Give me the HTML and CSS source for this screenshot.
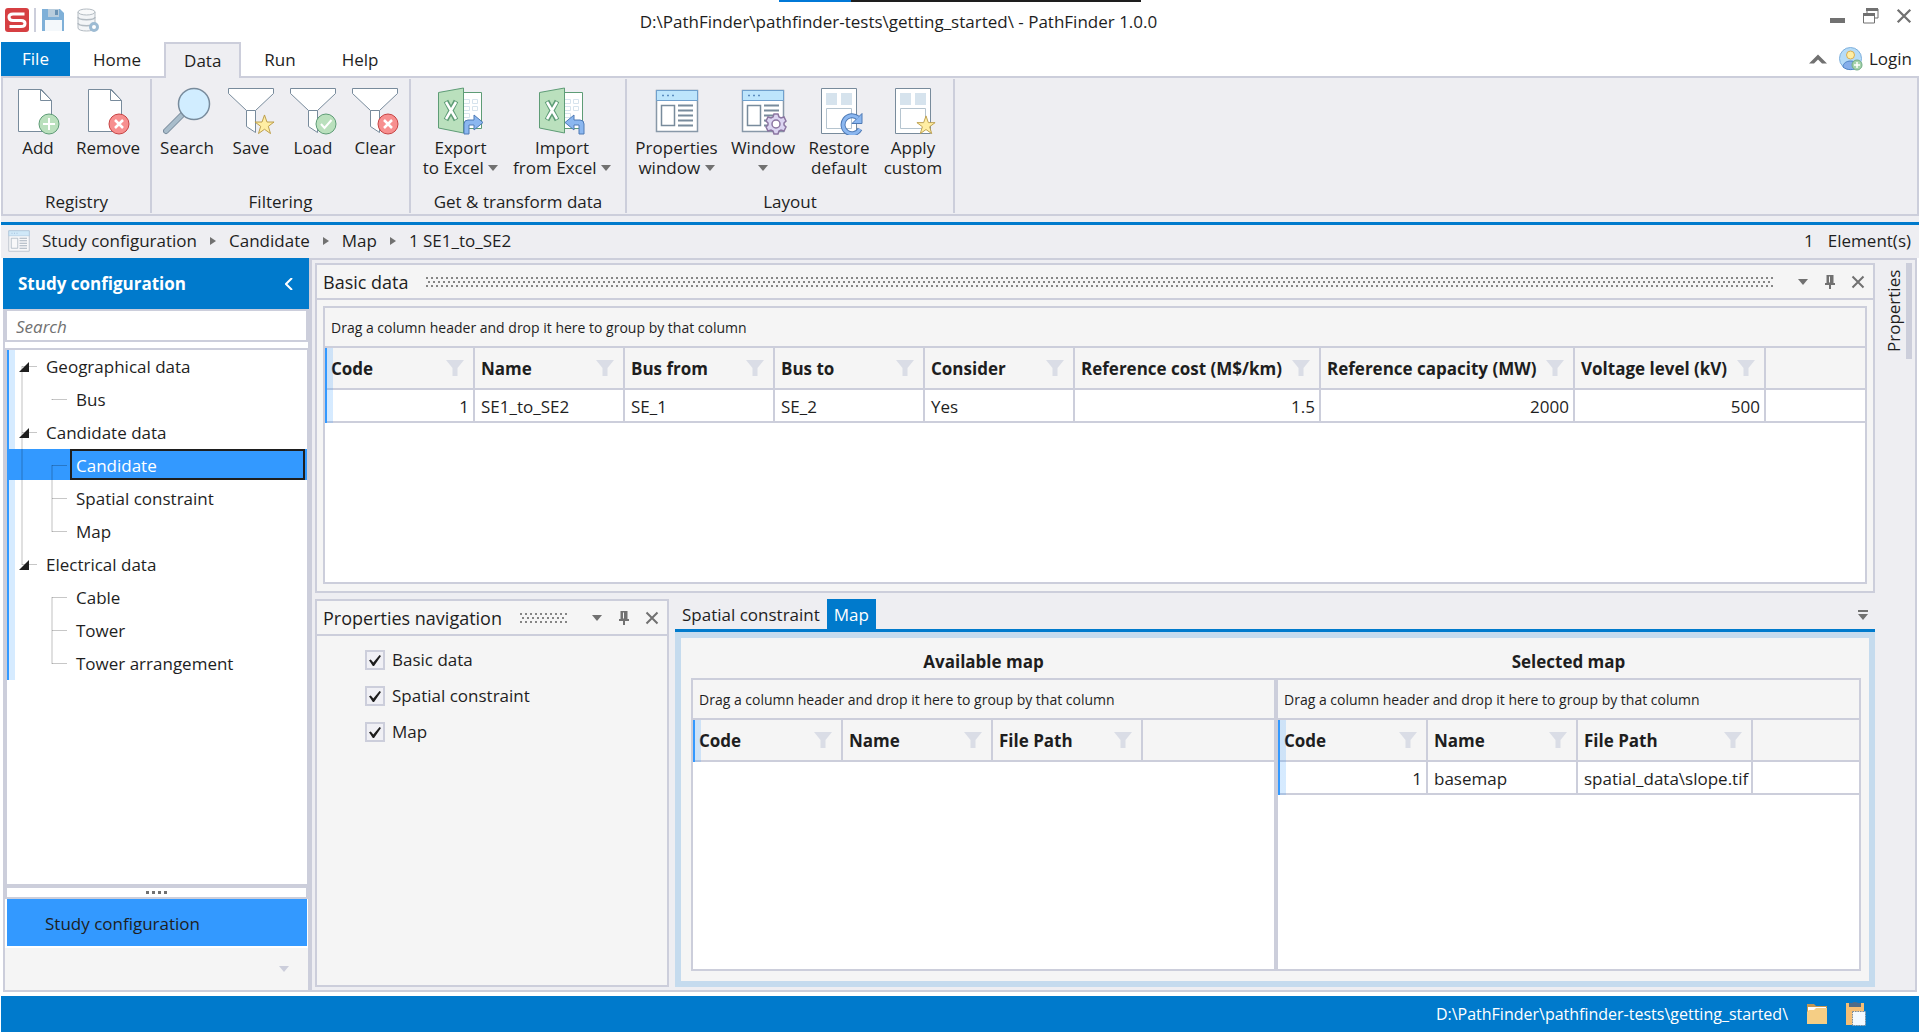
FILE: index.html
```html
<!DOCTYPE html>
<html lang="en">
<head>
  <meta charset="UTF-8">
  <title>PathFinder 1.0.0</title>
  <link rel="stylesheet" href="styles.css">
</head>
<body>
<!-- shared icons -->
<svg class="sprite" width="0" height="0">
  <symbol id="page" viewBox="0 0 48 48">
    <path d="M4.500 2.500h23l10 11v31h-33z" fill="#fff" stroke="#788b9c"/>
    <path d="M26.500 2.500v11h11z" fill="#fff" stroke="#788b9c"/>
  </symbol>
  <symbol id="plus-badge" viewBox="0 0 22 22">
    <circle cx="11" cy="11" r="10" fill="#bae0bd" stroke="#5e9c76"/>
    <path d="M11 5v12M5 11h12" stroke="#fff" stroke-width="2"/>
  </symbol>
  <symbol id="cross-badge" viewBox="0 0 22 22">
    <circle cx="11" cy="11" r="10" fill="#f78f8f" stroke="#c74343"/>
    <path d="M7 7l8 8M15 7l-8 8" stroke="#fff" stroke-width="2.500"/>
  </symbol>
  <symbol id="check-badge" viewBox="0 0 22 22">
    <circle cx="11" cy="11" r="10" fill="#bae0bd" stroke="#5e9c76"/>
    <path d="M6 11l3.500 4 7-8" fill="none" stroke="#fff" stroke-width="2"/>
  </symbol>
  <symbol id="star" viewBox="0 0 22 22">
    <path d="M11 1l2.600 7.400h7.400l-6 4.500 2.300 7.600-6.300-4.500-6.300 4.500 2.300-7.600-6-4.500h7.400z" fill="#ffeea3" stroke="#ba9b48"/>
  </symbol>
  <symbol id="funnel" viewBox="0 0 48 48">
    <path d="M19.500 23.500h9v22l-9-6z" fill="#fff" stroke="#788b9c"/>
    <path d="M1.500 1.500h45v5l-18 17h-9l-18-17z" fill="#fff" stroke="#788b9c"/>
  </symbol>
  <symbol id="excel" viewBox="0 0 48 48">
    <path d="M26 5.500h18.500v36h-18.500z" fill="#fff" stroke="#5e9c76"/>
    <path d="M26.500 12.500h6v4h-6zM35.500 12.500h5v4h-5zM26.500 19.500h6v4h-6zM35.500 19.500h5v4h-5zM26.500 26.500h6v4h-6z" fill="#fff" stroke="#d6e3ed"/>
    <path d="M1.500 5.500l25-4.500v45l-25-5z" fill="#bae0bd" stroke="#5e9c76"/>
    <path d="M9 14l10 19M19 14l-10 19" stroke="#5e9c76" stroke-width="5"/>
    <path d="M9 15l10 17M19 15l-10 17" stroke="#fff" stroke-width="2.500"/>
  </symbol>
  <symbol id="form" viewBox="0 0 48 48">
    <path d="M3.500 3.500h41v41h-41z" fill="#fff" stroke="#8898a8" stroke-width="1.500"/>
    <path d="M3.500 3.500h41v10h-41z" fill="#bde5fc" stroke="#6fa0cd"/>
    <path d="M9 8.500h2M14 8.500h2M19 8.500h2" stroke="#5b8dbf" stroke-width="1.500"/>
    <path d="M8.500 18.500h13v20h-13z" fill="#fff" stroke="#788b9c" stroke-width="1.500"/>
    <path d="M25 18.500h15M25 23.500h15M25 28.500h15M25 33.500h15M25 38.500h15" stroke="#788b9c" stroke-width="2"/>
  </symbol>
  <symbol id="gear" viewBox="0 0 22 22">
    <path d="M9 1h4l1 3 2 1 3-1 2 4-2 2v2l2 2-2 4-3-1-2 1-1 3h-4l-1-3-2-1-3 1-2-4 2-2v-2l-2-2 2-4 3 1 2-1z" fill="#dcd5f2" stroke="#8b75a1" stroke-width="1.500"/>
    <circle cx="11" cy="11" r="4" fill="#fff" stroke="#8b75a1" stroke-width="1.500"/>
  </symbol>
  <symbol id="layout" viewBox="0 0 48 48">
    <path d="M6.500 1.500h35v45h-35z" fill="#fff" stroke="#788b9c"/>
    <path d="M11 6h11v12h-11zM26 6h11v12h-11z" fill="#d6e3ed"/>
    <path d="M11.500 21.500h25v20h-25z" fill="#fff" stroke="#b5c4cf"/>
  </symbol>
  <symbol id="pin" viewBox="0 0 12 16">
    <path d="M2.500 1h7v8h1.500v2h-4v4h-2v-4h-4v-2h1.500zM5 2.500v6h1v-6z" fill="#717171" fill-rule="evenodd"/>
  </symbol>
  <symbol id="close" viewBox="0 0 14 14">
    <path d="M1.500 1.500l11 11M12.500 1.500l-11 11" stroke="#717171" stroke-width="2"/>
  </symbol>
  <symbol id="filter" viewBox="0 0 18 16">
    <path d="M0 0h18l-6.500 8v8h-5v-8z" fill="#dadde6"/>
  </symbol>
</svg>

<header class="titlebar">
  <div class="quick">
    <svg width="24" height="24" viewBox="0 0 24 24"><rect width="24" height="24" rx="3" fill="#d63f42"/><path d="M19.500 6h-11.500c-3 0-4 1-4 3s1 3.500 4 3.500h8c3 0 4 1 4 3s-1 3-4 3h-11.500" fill="none" stroke="#fff" stroke-width="3"/></svg>
    <span class="quick-sep"></span>
    <button aria-label="Save all"><svg width="24" height="24" viewBox="0 0 24 24"><path d="M1 1h18l4 4v18h-22z" fill="#7fb0d8"/><path d="M7 1h11v8h-11z" fill="#b9cddd"/><path d="M14 2h3v5h-3z" fill="#6b93b5"/><path d="M4 12h17v11h-17z" fill="#f4f8fb"/></svg></button>
    <button aria-label="Database"><svg width="24" height="24" viewBox="0 0 24 24"><path d="M2 4v16c0 4 17 4 17 0v-16" fill="#f3f5f7" stroke="#b3bbc2"/><path d="M2 9c0 3.500 17 3.500 17 0M2 15c0 3.500 17 3.500 17 0" fill="none" stroke="#b3bbc2" stroke-width="1.500"/><ellipse cx="10.500" cy="4" rx="8.500" ry="3" fill="#f8f9fa" stroke="#b3bbc2"/><circle cx="18" cy="19" r="3.500" fill="#fff" stroke="#9dbbd3" stroke-width="3"/></svg></button>
  </div>
  <div class="title">D:\PathFinder\pathfinder-tests\getting_started\ - PathFinder 1.0.0</div>
  <div class="winbtns">
    <button aria-label="Minimize"><svg width="16" height="16" viewBox="0 0 16 16"><path d="M0 10h15v5h-15z" fill="#717171"/></svg></button>
    <button aria-label="Restore"><svg width="16" height="16" viewBox="0 0 16 16"><path d="M4 5v-4h11v9h-3" fill="none" stroke="#717171"/><path d="M3 1.500h12" stroke="#717171" stroke-width="3"/><path d="M.5 6.500h11v8.500h-11z" fill="#fff" stroke="#717171"/><path d="M0 6.500h12" stroke="#717171" stroke-width="3"/></svg></button>
    <button aria-label="Close"><svg width="16" height="16" viewBox="0 0 14 14"><use href="#close"/></svg></button>
  </div>
  <div class="progress"></div>
</header>

<nav class="tabs">
  <button class="file">File</button>
  <button>Home</button>
  <button class="on">Data</button>
  <button>Run</button>
  <button>Help</button>
  <div class="account">
    <svg width="18" height="10" viewBox="0 0 18 10"><path d="M0 9.500l9-9 9 9h-5l-4-4-4 4z" fill="#717171"/></svg>
    <button class="login">
      <svg width="24" height="24" viewBox="0 0 24 24"><circle cx="11.500" cy="11.500" r="11" fill="#b6dcf7" stroke="#7eafdc"/><path d="M4 20c0-8 15-8 15 0-4 3.500-11 3.500-15 0z" fill="#85aeea" stroke="#4c82c4"/><circle cx="11.500" cy="8" r="4" fill="#ffeea3" stroke="#d8ad55"/><circle cx="18" cy="18" r="5" fill="#a5d3ab" stroke="#71ac84"/><path d="M18 15v6M15 18h6" stroke="#fff" stroke-width="1.500"/></svg>
      Login
    </button>
  </div>
</nav>

<section class="ribbon">
  <div class="group registry">
    <div class="tools">
      <button><svg viewBox="0 0 48 48"><use href="#page"/><use href="#plus-badge" x="24" y="26" width="22" height="22"/></svg>Add</button>
      <button class="w-m"><svg viewBox="0 0 48 48"><use href="#page"/><use href="#cross-badge" x="24" y="26" width="22" height="22"/></svg>Remove</button>
    </div>
    <div class="caption">Registry</div>
  </div>
  <div class="group">
    <div class="tools">
      <button class="w-search"><svg viewBox="0 0 48 48"><path d="M21 26l-18 18" stroke="#788b9c" stroke-width="6" stroke-linecap="round"/><path d="M21 26l-18 18" stroke="#a9bdcb" stroke-width="4" stroke-linecap="round"/><circle cx="31" cy="17" r="15.500" fill="#d1edff" stroke="#788b9c" stroke-width="1.500"/></svg>Search</button>
      <button><svg viewBox="0 0 48 48"><use href="#funnel"/><use href="#star" x="27" y="27" width="21" height="21"/></svg>Save</button>
      <button><svg viewBox="0 0 48 48"><use href="#funnel"/><use href="#check-badge" x="26" y="26" width="22" height="22"/></svg>Load</button>
      <button><svg viewBox="0 0 48 48"><use href="#funnel"/><use href="#cross-badge" x="26" y="26" width="22" height="22"/></svg>Clear</button>
    </div>
    <div class="caption">Filtering</div>
  </div>
  <div class="group transform">
    <div class="tools">
      <button class="w-l"><svg viewBox="0 0 48 48"><use href="#excel"/><path d="M27 47v-10q0-4 4-4h6v-5l9 7.500-9 7.500v-5h-5v9z" fill="#8bb7f0" stroke="#4e7ab5"/></svg>Export<span>to Excel <i class="caret"></i></span></button>
      <button class="w-xl"><svg viewBox="0 0 48 48"><use href="#excel"/><path d="M46 47v-10q0-4-4-4h-6v-5l-9 7.500 9 7.500v-5h5v9z" fill="#8bb7f0" stroke="#4e7ab5"/></svg>Import<span>from Excel <i class="caret"></i></span></button>
    </div>
    <div class="caption">Get &amp; transform data</div>
  </div>
  <div class="group">
    <div class="tools">
      <button class="w-l"><svg viewBox="0 0 48 48"><use href="#form"/></svg>Properties<span>window <i class="caret"></i></span></button>
      <button class="w-m"><svg viewBox="0 0 48 48"><use href="#form"/><use href="#gear" x="26" y="26" width="22" height="22"/></svg>Window<span><i class="caret"></i></span></button>
      <button class="w-s"><svg viewBox="0 0 48 48"><use href="#layout"/><path d="M43 31a9 9 0 1 0 2 11" fill="none" stroke="#4e7ab5" stroke-width="5"/><path d="M37 36.500h10v-10z" fill="#8bb7f0" stroke="#4e7ab5"/><path d="M43 31a9 9 0 1 0 2 11" fill="none" stroke="#8bb7f0" stroke-width="3"/></svg>Restore<span>default</span></button>
      <button class="w-s"><svg viewBox="0 0 48 48"><use href="#layout"/><use href="#star" x="27" y="28" width="20" height="20"/></svg>Apply<span>custom</span></button>
    </div>
    <div class="caption">Layout</div>
  </div>
</section>

<div class="crumbs">
  <svg class="crumb-icon" width="24" height="24" viewBox="0 0 48 48"><use href="#form"/></svg>
  <a>Study configuration</a><i class="arrow"></i>
  <a>Candidate</a><i class="arrow"></i>
  <a>Map</a><i class="arrow"></i>
  <a>1 SE1_to_SE2</a>
  <div class="count"><span>1</span><span>Element(s)</span></div>
</div>

<main class="workspace">
  <aside class="sidebar">
    <div class="side-head">Study configuration
      <button aria-label="Collapse"><svg width="8" height="12" viewBox="0 0 8 12"><path d="M7 0l-6 6 6 6" fill="none" stroke="#fff" stroke-width="2"/></svg></button>
    </div>
    <input class="side-search" type="text" placeholder="Search" aria-label="Search">
    <div class="tree-wrap">
      <ul class="tree">
        <li><div class="node">Geographical data</div>
          <ul><li><div class="leaf">Bus</div></li></ul>
        </li>
        <li><div class="node">Candidate data</div>
          <ul>
            <li class="on"><div class="leaf">Candidate</div></li>
            <li><div class="leaf">Spatial constraint</div></li>
            <li><div class="leaf">Map</div></li>
          </ul>
        </li>
        <li><div class="node">Electrical data</div>
          <ul>
            <li><div class="leaf">Cable</div></li>
            <li><div class="leaf">Tower</div></li>
            <li><div class="leaf">Tower arrangement</div></li>
          </ul>
        </li>
      </ul>
    </div>
    <div class="splitter"><i></i><i></i><i></i><i></i></div>
    <button class="side-item">Study configuration</button>
    <div class="side-foot"><i class="caret"></i></div>
  </aside>

  <div class="dock">
    <div class="panes">
      <section class="pane basic">
        <div class="pane-head">
          <h2>Basic data</h2><div class="grip"></div>
          <button aria-label="Menu"><i class="caret"></i></button>
          <button aria-label="Pin"><svg width="12" height="16"><use href="#pin"/></svg></button>
          <button aria-label="Close"><svg width="14" height="14"><use href="#close"/></svg></button>
        </div>
        <div class="grid">
          <div class="group-by">Drag a column header and drop it here to group by that column</div>
          <div class="table-wrap">
            <table>
              <colgroup><col class="c150"><col class="c150"><col class="c150"><col class="c150"><col class="c150"><col class="c246"><col class="c254"><col class="c191"><col></colgroup>
              <tr>
                <th>Code<svg><use href="#filter"/></svg></th>
                <th>Name<svg><use href="#filter"/></svg></th>
                <th>Bus from<svg><use href="#filter"/></svg></th>
                <th>Bus to<svg><use href="#filter"/></svg></th>
                <th>Consider<svg><use href="#filter"/></svg></th>
                <th>Reference cost (M$/km)<svg><use href="#filter"/></svg></th>
                <th>Reference capacity (MW)<svg><use href="#filter"/></svg></th>
                <th>Voltage level (kV)<svg><use href="#filter"/></svg></th>
                <th></th>
              </tr>
              <tr>
                <td class="num">1</td><td>SE1_to_SE2</td><td>SE_1</td><td>SE_2</td><td>Yes</td>
                <td class="num">1.5</td><td class="num">2000</td><td class="num">500</td><td></td>
              </tr>
            </table>
          </div>
        </div>
      </section>

      <div class="lower">
        <section class="pane navigation">
          <div class="pane-head">
            <h2>Properties navigation</h2><div class="grip"></div>
            <button aria-label="Menu"><i class="caret"></i></button>
            <button aria-label="Pin"><svg width="12" height="16"><use href="#pin"/></svg></button>
            <button aria-label="Close"><svg width="14" height="14"><use href="#close"/></svg></button>
          </div>
          <div class="checks">
            <label><input type="checkbox" checked>Basic data</label>
            <label><input type="checkbox" checked>Spatial constraint</label>
            <label><input type="checkbox" checked>Map</label>
          </div>
        </section>

        <section class="doc">
          <div class="doc-tabs">
            <button>Spatial constraint</button>
            <button class="on">Map</button>
            <button class="more" aria-label="Documents"><svg width="10" height="10" viewBox="0 0 10 10"><path d="M0 0h10v2h-10zM0 4h10l-5 6z" fill="#717171"/></svg></button>
          </div>
          <div class="doc-body">
            <div class="half">
              <h3>Available map</h3>
              <div class="grid">
                <div class="group-by">Drag a column header and drop it here to group by that column</div>
                <div class="table-wrap">
                  <table>
                    <colgroup><col class="c150"><col class="c150"><col class="c150"><col></colgroup>
                    <tr>
                      <th>Code<svg><use href="#filter"/></svg></th>
                      <th>Name<svg><use href="#filter"/></svg></th>
                      <th>File Path<svg><use href="#filter"/></svg></th>
                      <th></th>
                    </tr>
                  </table>
                </div>
              </div>
            </div>
            <div class="half">
              <h3>Selected map</h3>
              <div class="grid">
                <div class="group-by">Drag a column header and drop it here to group by that column</div>
                <div class="table-wrap">
                  <table>
                    <colgroup><col class="c150"><col class="c150"><col class="c175"><col></colgroup>
                    <tr>
                      <th>Code<svg><use href="#filter"/></svg></th>
                      <th>Name<svg><use href="#filter"/></svg></th>
                      <th>File Path<svg><use href="#filter"/></svg></th>
                      <th></th>
                    </tr>
                    <tr>
                      <td class="num">1</td><td>basemap</td><td>spatial_data\slope.tif</td><td></td>
                    </tr>
                  </table>
                </div>
              </div>
            </div>
          </div>
        </section>
      </div>
    </div>
    <button class="side-tab">Properties</button>
  </div>
</main>

<footer class="status">
  <span>D:\PathFinder\pathfinder-tests\getting_started\</span>
  <svg width="20" height="20" viewBox="0 0 20 20"><path d="M0 0h7l2 2h11v18h-20z" fill="#c49752"/><path d="M1 3h18v8h-18z" fill="#fff"/><path d="M0 8l2-2h5l2-2h11v16h-20z" fill="#f5ce85"/></svg>
  <svg width="20" height="24" viewBox="0 0 20 24"><path d="M0 1h18v22h-18z" fill="#f5be74"/><path d="M3 1h3q3-2 6 0h3v4h-12z" fill="#4e6c88"/><path d="M6.500 9.500h13v14h-13z" fill="#f3f9ff" stroke="#788b9c" stroke-dasharray="1.500 1"/></svg>
</footer>
</body>
</html>
```
FILE: styles.css
```css
*{padding: 0; margin: 0; box-sizing: border-box;}
ul{list-style: none;}
svg{display: block; flex: none;}
body{
  display: flex;
  flex-direction: column;
  height: 100vh;
  padding: 0 1px 1px;
  background-color: #fff;
  color: #1e1e1e;
  font: 17px/20px "Open Sans", "Noto Sans", sans-serif;
}
button, input{
  border: none;
  background: none;
  color: inherit;
  font: inherit;
}
.sprite{
  position: absolute;
}
.caret{
  display: inline-block;
  border: 5px solid transparent;
  border-top: 6px solid #717171;
  border-bottom: none;
}

/* title bar */
.titlebar{
  position: relative;
  display: flex;
  height: 42px;
  padding: 8px 7px 0 4px;
}
.quick, .winbtns{
  display: flex;
  height: 24px;
}
.quick{
  gap: 5px;
  width: 96px;
}
.quick button + button{
  margin-left: 6px;
}
.quick-sep{
  width: 2px;
  background-color: #cccedb;
}
.title{
  flex: 1;
  line-height: 28px;
  text-align: center;
}
.winbtns{
  justify-content: flex-end;
  gap: 17px;
  width: 216px;
}
.winbtns button{
  height: 16px;
}
.progress{
  position: absolute;
  top: 0;
  left: 778px;
  width: 362px;
  height: 2px;
  background: linear-gradient(90deg, #0078d7 72px, #1e1e1e 72px);
}

/* ribbon */
.tabs{
  display: flex;
  height: 36px;
  border-bottom: 2px solid #cccedb;
}
.tabs > button{
  padding: 2px 23px 0;
}
.tabs .file{
  width: 69px;
  padding: 0;
  background-color: #007acc;
  color: #fff;
}
.tabs .on{
  height: 36px;
  padding: 0 18px;
  border: 2px solid #cccedb;
  border-bottom: none;
  background-color: #eeeef2;
}
.account{
  display: flex;
  align-items: center;
  gap: 12px;
  margin-left: auto;
  padding-right: 7px;
}
.login{
  display: flex;
  align-items: center;
  gap: 6px;
}
.ribbon{
  display: flex;
  height: 138px;
  border: 2px solid #cccedb;
  border-top: none;
  background-color: #eeeef2;
}
.group{
  display: flex;
  flex-direction: column;
  justify-content: space-between;
  margin: 1px 0;
  padding-top: 8px;
  border-right: 2px solid #cccedb;
}
.tools{
  display: flex;
  padding: 0 3px 0 2px;
}
.registry .tools{
  padding-left: 4px;
}
.transform .tools{
  padding-right: 9px;
}
.tools button{
  display: flex;
  flex-direction: column;
  align-items: center;
  width: 62px;
  white-space: nowrap;
}
.tools svg{
  width: 48px;
  height: 48px;
  margin-bottom: 3px;
}
.tools .w-search{width: 66px;}
.tools .w-s{width: 74px;}
.tools .w-m{width: 78px;}
.tools .w-l{width: 95px;}
.tools .w-xl{width: 108px;}
.tools .caret{
  vertical-align: 3px;
}
.caption{
  line-height: 22px;
  text-align: center;
}

/* breadcrumb */
.crumbs{
  display: flex;
  align-items: center;
  height: 42px;
  padding: 8px 8px 0 6px;
  background: linear-gradient(#eeeef2 6px, #007acc 6px, #007acc 9px, #eeeef2 9px);
}
.crumb-icon{
  margin-right: 11px;
  opacity: .6;
}
.arrow{
  margin: 0 13px;
  border: 4px solid transparent;
  border-left: 6px solid #717171;
  border-right: none;
}
.count{
  display: flex;
  gap: 14px;
  margin-left: auto;
}

/* sidebar */
.workspace{
  display: flex;
  flex: 1;
  min-height: 0;
  padding: 0 2px;
}
.sidebar{
  display: flex;
  flex-direction: column;
  width: 307px;
  border: 2px solid #cccedb;
  border-top: none;
  background-color: #fff;
}
.side-head{
  display: flex;
  align-items: center;
  justify-content: space-between;
  height: 51px;
  margin: 0 -1px 0 -2px;
  padding: 0 16px 0 15px;
  background-color: #007acc;
  color: #fff;
  font-weight: bold;
}
.side-search{
  height: 33px;
  padding: 2px 9px 0;
  border: 2px solid #cccedb;
  font-style: italic;
}
.side-search::placeholder{
  color: #717171;
}
.tree-wrap{
  flex: 1;
  margin-top: 6px;
  border: 2px solid #cccedb;
  border-right-width: 1px;
  border-bottom-width: 4px;
}
.tree{
  position: relative;
  background: linear-gradient(90deg, #3399ff 2px, #d6ebff 2px, #d6ebff 8px, #fff 8px);
}
.tree li{
  position: relative;
}
.node, .leaf{
  height: 33px;
  line-height: 33px;
}
.node{
  padding-left: 39px;
}
.leaf{
  margin-left: 63px;
  padding-left: 6px;
}
/* connector lines */
.tree::before, .tree ul::before{
  content: "";
  position: absolute;
  top: 16px;
  bottom: 115px;
  left: 14px;
  z-index: 1;
  border-left: 2px solid rgba(0,0,0,.12);
}
.tree ul{
  position: relative;
}
.tree ul::before{
  bottom: 16px;
  left: 44px;
}
.tree li::before{
  content: "";
  position: absolute;
  top: 16px;
  left: 15px;
  width: 15px;
  border-top: 1px solid rgba(0,0,0,.22);
}
.tree li li::before{
  left: 45px;
}
.node::before{
  content: "";
  position: absolute;
  top: 12px;
  left: 12px;
  z-index: 2;
  width: 10px;
  height: 10px;
  background-color: #1e1e1e;
  clip-path: polygon(100% 0, 100% 100%, 0 100%);
}
.tree .on{
  height: 33px;
  padding-right: 2px;
  background: linear-gradient(#3399ff, #3399ff) 0 0 / 100% 31px no-repeat;
  color: #fff;
}
.on .leaf{
  height: 31px;
  padding-left: 4px;
  border: 2px solid #1e1e1e;
  line-height: 29px;
}
.splitter{
  display: flex;
  align-items: center;
  justify-content: center;
  gap: 3px;
  height: 11px;
  border: 2px solid #cccedb;
  border-top: none;
}
.splitter i{
  width: 3px;
  height: 3px;
  background-color: #717171;
}
.side-item{
  height: 47px;
  margin: 0 1px 2px 2px;
  padding: 2px 0 0 38px;
  background-color: #3399ff;
  text-align: left;
}
.side-foot{
  height: 42px;
  padding: 8px 19px;
  background-color: #f5f5f5;
  text-align: right;
}
.side-foot .caret{
  border-top-color: #cccedb;
}

/* dock area */
.dock{
  display: flex;
  flex: 1;
  min-width: 0;
  padding: 3px;
  border: 2px solid #cccedb;
  background-color: #eeeef2;
}
.panes{
  display: flex;
  flex: 1;
  flex-direction: column;
  gap: 6px;
  min-width: 0;
}
.lower{
  display: flex;
  flex: 1;
  gap: 6px;
}
.pane{
  border: 2px solid #cccedb;
  background-color: #f5f5f5;
}
.basic{
  display: flex;
  flex-direction: column;
  height: 330px;
}
.basic .grid{
  flex: 1;
  margin: 6px;
  margin-bottom: 7px;
}
.navigation{
  width: 354px;
}
.pane-head{
  display: flex;
  align-items: center;
  height: 35px;
  padding: 0 8px 0 6px;
  border-bottom: 2px solid #cccedb;
}
h2{
  font-size: 18px;
  font-weight: normal;
}
.grip{
  flex: 1;
  height: 10px;
  margin: 0 22px 0 18px;
  background:
    radial-gradient(circle at 1px 1px, #858585 1px, transparent 1px) 0 0 / 5px 8px,
    radial-gradient(circle at 1px 1px, #858585 1px, transparent 1px) 2px 4px / 5px 8px;
}
.pane-head button{
  margin-left: 15px;
}
.pane-head button:first-of-type{
  margin: 0 1px 0 3px;
}
.pane-head .caret{
  display: block;
}
.side-tab{
  align-self: flex-start;
  width: 31px;
  height: 96px;
  margin-left: 6px;
  border-left: 6px solid #cccedb;
  writing-mode: vertical-rl;
  transform: rotate(180deg);
}

/* data grids */
.grid{
  border: 2px solid #cccedb;
  background-color: #fff;
}
.group-by{
  height: 40px;
  padding-left: 6px;
  border-bottom: 2px solid #cccedb;
  background-color: #f5f5f5;
  font-size: 14px;
  line-height: 39px;
}
.table-wrap{
  position: relative;
}
.table-wrap::before{
  content: "";
  position: absolute;
  top: 0;
  bottom: 0;
  left: 0;
  width: 8px;
  background: linear-gradient(90deg, #3399ff 2px, rgba(51,153,255,.2) 2px);
}
table{
  width: 100%;
  border-spacing: 0;
  table-layout: fixed;
}
.c150{width: 150px;}
.c175{width: 175px;}
.c191{width: 191px;}
.c246{width: 246px;}
.c254{width: 254px;}
th, td{
  padding: 2px 4px 0 6px;
  border-right: 2px solid #cccedb;
  border-bottom: 2px solid #cccedb;
  text-align: left;
  white-space: nowrap;
}
th{
  height: 42px;
  background-color: #f5f5f5;
}
th svg{
  float: right;
  width: 18px;
  height: 16px;
  margin: 1px 5px 0 0;
}
td{
  height: 33px;
}
th:last-child, td:last-child{
  border-right: none;
}
.num{
  text-align: right;
}

/* properties navigation */
.checks{
  display: flex;
  flex-direction: column;
  gap: 16px;
  padding: 14px 48px;
}
.checks label{
  display: flex;
  gap: 7px;
}
.checks input{
  width: 20px;
  height: 20px;
  border: 2px solid #cccedb;
  background-color: #f0f0f5;
  appearance: none;
}
.checks input:checked::before{
  content: "";
  display: block;
  width: 12px;
  height: 11px;
  margin: 3px 2px;
  background-color: #1e1e1e;
  clip-path: polygon(0 48%, 15% 40%, 36% 68%, 88% 0, 100% 8%, 42% 100%, 32% 100%);
}

/* map document */
.doc{
  display: flex;
  flex: 1;
  flex-direction: column;
  min-width: 0;
}
.doc-tabs{
  display: flex;
  height: 33px;
  border-bottom: 3px solid #007acc;
}
.doc-tabs button{
  padding: 2px 7px 0;
}
.doc-tabs .on{
  background-color: #007acc;
  color: #fff;
}
.doc-tabs .more{
  margin-left: auto;
}
.doc-body{
  display: flex;
  flex: 1;
  padding: 10px 8px 10px 10px;
  border: 6px solid #c5dbee;
  background-color: #f5f5f5;
}
.half{
  display: flex;
  flex: 1;
  flex-direction: column;
  min-width: 0;
}
h3{
  padding: 4px 0 6px;
  font-size: 17px;
  text-align: center;
}
.half .grid{
  flex: 1;
}

/* status bar */
.status{
  display: flex;
  align-items: center;
  justify-content: flex-end;
  gap: 19px;
  height: 36px;
  margin-top: 4px;
  padding-right: 53px;
  background-color: #007acc;
  color: #fff;
  font-size: 16px;
}
```
